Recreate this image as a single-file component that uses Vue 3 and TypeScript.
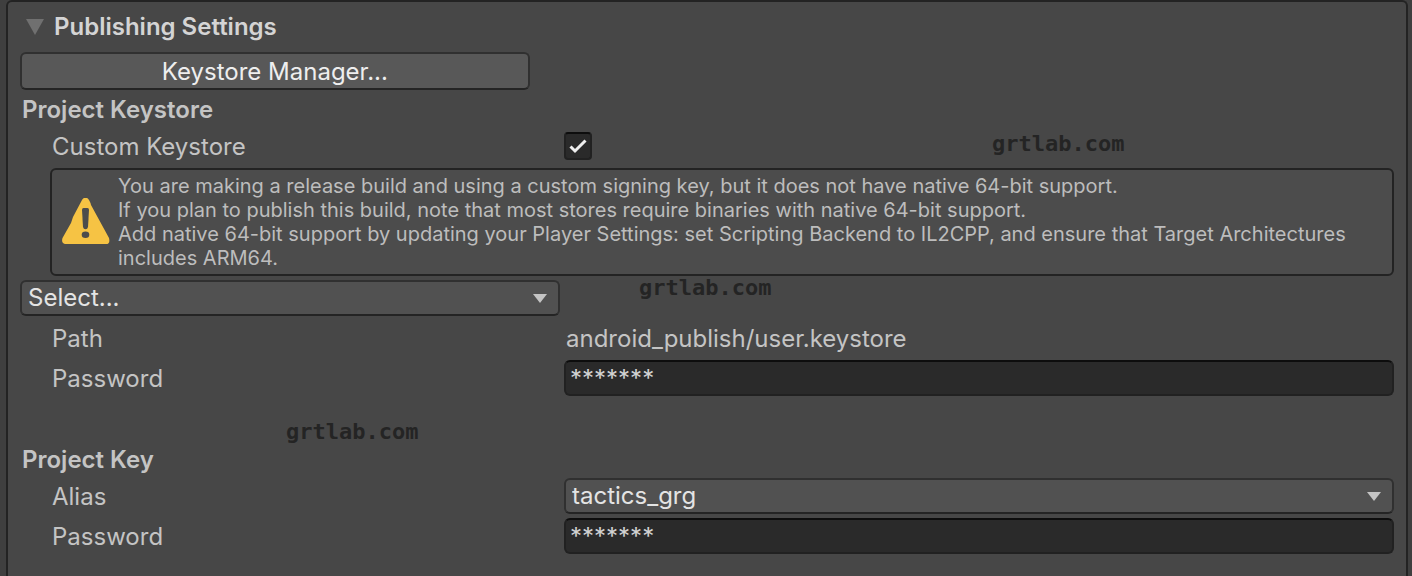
<script setup lang="ts">
import { ref } from 'vue'

const open = ref(true)
const customKeystore = ref(true)
const keystoreAction = ref('Select...')
const keystorePath = 'android_publish/user.keystore'
const keystorePassword = ref('*******')
const alias = ref('tactics_grg')
const aliasPassword = ref('*******')

const warning = [
  'You are making a release build and using a custom signing key, but it does not have native 64-bit support.',
  'If you plan to publish this build, note that most stores require binaries with native 64-bit support.',
  'Add native 64-bit support by updating your Player Settings: set Scripting Backend to IL2CPP, and ensure that Target Architectures includes ARM64.',
]
</script>

<template>
  <main class="inspector">
    <section class="panel">
      <h2 class="title">
        <button class="foldout" type="button" :aria-expanded="open" @click="open = !open">
          <svg class="fold-arrow" viewBox="0 0 18 16" aria-hidden="true"><path d="M0 0H18L9 16Z" /></svg>
          <span>Publishing Settings</span>
        </button>
      </h2>
      <div v-if="open" class="body">
        <button class="manager" type="button">Keystore Manager...</button>

        <h3 class="heading">Project Keystore</h3>
        <div class="fields">
          <div class="row">
            <label class="label" for="custom">Custom Keystore</label>
            <span class="check">
              <input id="custom" v-model="customKeystore" type="checkbox" />
              <svg v-if="customKeystore" class="tick" viewBox="0 0 28 28" aria-hidden="true">
                <path d="M6.500 14.500L11 19L21.500 8.500" />
              </svg>
            </span>
          </div>

          <div class="help" role="note">
            <svg class="warn" viewBox="0 0 48 48" aria-hidden="true">
              <path class="warn-fill" d="M20 2Q23.500-3 27 2Q28.500 4.500 29 7L47 40Q48.500 46 44 46H3Q-1 45 0.500 40L9 25L11 19Z" />
              <path class="warn-mark" d="M20 12Q20 10 21.500 10H25.500Q27 10 27 12L26 29Q25.500 31.300 23.500 31.300T21 29Z" />
              <ellipse class="warn-mark" cx="23.500" cy="36.800" rx="3.800" ry="3.300" />
            </svg>
            <div class="message">
              <p v-for="line in warning" :key="line">{{ line }}</p>
            </div>
          </div>

          <div class="dropdown short">
            <select v-model="keystoreAction" aria-label="Keystore">
              <option>Select...</option>
            </select>
            <svg class="caret" viewBox="0 0 14 9" aria-hidden="true"><path d="M0 0H14L7 9Z" /></svg>
          </div>

          <div class="row">
            <span class="label">Path</span>
            <span class="path">{{ keystorePath }}</span>
          </div>
          <div class="row">
            <label class="label" for="store-pass">Password</label>
            <input id="store-pass" v-model="keystorePassword" class="text" type="text" autocomplete="off" />
          </div>
        </div>

        <h3 class="heading key-heading">Project Key</h3>
        <div class="fields">
          <div class="row">
            <label class="label" for="alias">Alias</label>
            <div class="dropdown">
              <select id="alias" v-model="alias">
                <option>tactics_grg</option>
              </select>
              <svg class="caret" viewBox="0 0 14 9" aria-hidden="true"><path d="M0 0H14L7 9Z" /></svg>
            </div>
          </div>
          <div class="row">
            <label class="label" for="key-pass">Password</label>
            <input id="key-pass" v-model="aliasPassword" class="text" type="text" autocomplete="off" />
          </div>
        </div>
      </div>
    </section>
    <span class="stamp stamp-a">grtlab.com</span>
    <span class="stamp stamp-b">grtlab.com</span>
    <span class="stamp stamp-c">grtlab.com</span>
  </main>
</template>

<style>
body {
  background: #3f3f3f;
}
</style>

<style scoped>
.inspector {
  position: relative;
  display: flex;
  min-height: 100vh;
  padding: 0 4px 0 6px;
  box-sizing: border-box;
  background: #3f3f3f;
  color: #c4c4c4;
  font: 24px/36px Inter, "Liberation Sans", sans-serif;
}
.inspector *,
.inspector *::before {
  box-sizing: border-box;
}
.panel {
  flex: 1;
  min-width: 0;
  padding: 0 12px 20px;
  border: 2px solid #232323;
  border-bottom: 0;
  border-radius: 6px 6px 0 0;
  background: #474747;
}
button,
select,
input {
  margin: 0;
  font: inherit;
}
.title {
  margin: 0;
  font-size: 24px;
  font-weight: 600;
}
.foldout {
  display: flex;
  align-items: center;
  gap: 10px;
  height: 50px;
  padding: 0 6px;
  border: 0;
  background: none;
  color: #d4d4d4;
}
.fold-arrow {
  width: 18px;
  height: 16px;
  fill: #707070;
}
.manager {
  display: block;
  width: 37.1%;
  height: 38px;
  padding: 2px 0 0;
  border: 2px solid #303030;
  border-bottom-color: #242424;
  border-radius: 6px;
  background: #585858;
  color: #eeeeee;
  line-height: 32px;
}
.heading {
  margin: 0;
  padding: 2px 0 0 2px;
  font-size: 24px;
  font-weight: 600;
  line-height: 36px;
}
.key-heading {
  margin-top: 44px;
}
.fields {
  display: flex;
  flex-direction: column;
  gap: 4px;
}
.row {
  display: grid;
  grid-template-columns: 544fr 830fr;
  align-items: center;
  min-height: 36px;
}
.label {
  padding: 2px 0 0 32px;
  line-height: 34px;
}
.check {
  position: relative;
  display: block;
  width: 28px;
  height: 28px;
}
.check input {
  display: block;
  width: 28px;
  height: 28px;
  appearance: none;
  border: 2px solid #212121;
  border-top-color: #0d0d0d;
  border-radius: 4px;
  background: #2a2a2a;
}
.tick {
  position: absolute;
  inset: 0;
  fill: none;
  stroke: #eeeeee;
  stroke-width: 3;
  pointer-events: none;
}
.help {
  display: flex;
  align-items: center;
  gap: 8px;
  margin-left: 30px;
  padding: 4px 8px 4px 10px;
  border: 2px solid #232323;
  border-radius: 6px;
  background: #4c4c4c;
  color: #bdbdbd;
  font-size: 20px;
  font-optical-sizing: none;
  line-height: 24px;
}
.warn {
  flex: none;
  width: 48px;
  height: 48px;
}
.warn-fill {
  fill: #f6c344;
}
.warn-mark {
  fill: #4c4c4c;
}
.message {
  flex: 1;
  min-width: 0;
}
.message p {
  margin: 0;
}
.dropdown {
  position: relative;
}
.short {
  width: 39.3%;
}
.dropdown select {
  display: block;
  width: 100%;
  height: 36px;
  padding: 0 36px 0 6px;
  appearance: none;
  border: 2px solid #303030;
  border-bottom-color: #242424;
  border-radius: 6px;
  background: #515151;
  color: #e4e4e4;
  line-height: 32px;
}
.caret {
  position: absolute;
  top: 14px;
  right: 13px;
  width: 14px;
  height: 9px;
  fill: #c4c4c4;
  pointer-events: none;
}
.path {
  padding: 2px 0 0 2px;
  line-height: 34px;
}
.text {
  width: 100%;
  height: 36px;
  padding: 2px 4px 0;
  border: 2px solid #212121;
  border-top-color: #0d0d0d;
  border-radius: 6px;
  background: #2a2a2a;
  color: #d2d2d2;
}
.stamp {
  position: absolute;
  color: #242424;
  font: bold 22px/28px "DejaVu Sans Mono", monospace;
  pointer-events: none;
}
.stamp-a {
  top: 130px;
  left: 992px;
}
.stamp-b {
  top: 274px;
  left: 639px;
}
.stamp-c {
  top: 418px;
  left: 286px;
}
</style>
